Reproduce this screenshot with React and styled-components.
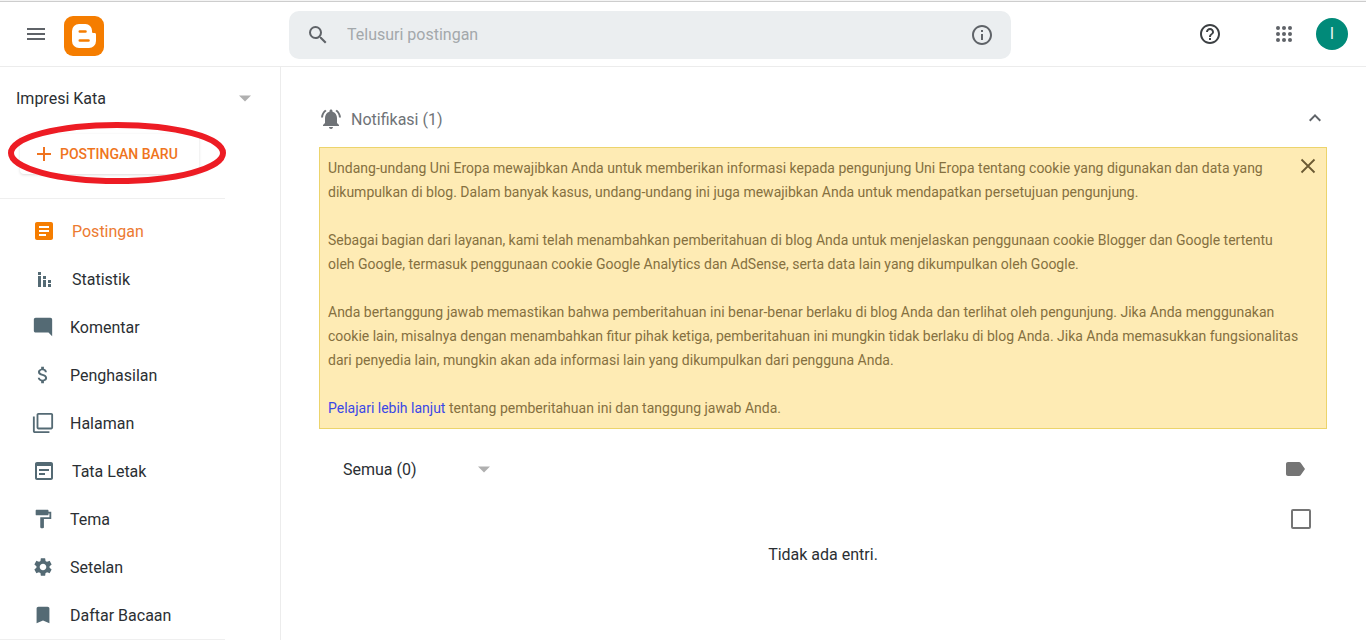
import React from "react";
import styled, { createGlobalStyle } from "styled-components";
import {
  MdMenu, MdSearch, MdInfoOutline, MdHelpOutline, MdArticle, MdModeComment,
  MdAttachMoney, MdFilterNone, MdFormatPaint, MdSettings, MdBookmark,
  MdNotificationsActive, MdExpandLess, MdLabel, MdAdd,
} from "react-icons/md";

const GlobalStyle = createGlobalStyle`
  *, *::before, *::after { box-sizing: border-box; }
  html, body, #root { height: 100%; }
  body {
    margin: 0;
    background: #fff;
    color: #2b2f33;
    font-family: Roboto, "Liberation Sans", sans-serif;
    font-size: 16px;
    line-height: 24px;
  }
  button, input, select { font: inherit; color: inherit; }
  svg { display: block; flex: none; }
`;

const Page = styled.div`
  min-height: 100%;
  display: flex;
  flex-direction: column;
  border-top: 1px solid #f4f4f4;
`;

const TopBar = styled.header`
  display: grid;
  grid-template-columns: 289px minmax(200px, 722px) 1fr;
  align-items: center;
  height: 66px;
  border-top: 1px solid #cdcdcd;
  border-bottom: 1px solid #ececec;
`;

const Brand = styled.div`
  display: flex;
  align-items: center;
  gap: 16px;
  padding: 4px 0 0 24px;
`;

const IconButton = styled.button`
  display: flex;
  align-items: center;
  justify-content: center;
  padding: 0;
  border: 0;
  background: none;
  color: ${(p) => p.$color || "#5f6368"};
  cursor: pointer;
`;

const MenuButton = styled(IconButton)`
  padding-bottom: 4px;
`;

const HomeLink = styled.a`
  display: block;
`;

const SearchBox = styled.form`
  display: flex;
  align-items: center;
  height: 48px;
  margin-top: 2px;
  padding: 0 17px;
  border-radius: 10px;
  background: #ebeef0;
`;

const SearchInput = styled.input`
  flex: 1;
  min-width: 0;
  padding: 0 16px 0 17px;
  border: 0;
  outline: 0;
  background: none;
  &::placeholder { color: #a3a8ab; opacity: 1; }
`;

const Tools = styled.div`
  display: flex;
  align-items: center;
  justify-content: flex-end;
  padding-right: 18px;
`;

const HelpSlot = styled.div`
  margin-right: 50px;
`;

const Avatar = styled.button`
  width: 32px;
  height: 32px;
  margin-left: 20px;
  padding: 0;
  border: 0;
  border-radius: 50%;
  background: #018a79;
  color: #e4f5f2;
`;

const Body = styled.div`
  flex: 1;
  display: flex;
`;

const Sidebar = styled.aside`
  flex: none;
  width: 281px;
  border-right: 1px solid #ececec;
`;

const SidebarSection = styled.div`
  width: 225px;
  padding: ${(p) => p.$pad || "0"};
  border-bottom: 1px solid #efefef;
`;

const SelectWrap = styled.div`
  display: grid;
  align-items: center;
  width: ${(p) => p.$width};
  margin: ${(p) => p.$margin || "0"};
  > * { grid-area: 1 / 1; }
  > svg { justify-self: end; color: #b0b0b0; pointer-events: none; }
`;

const Select = styled.select`
  appearance: none;
  width: 100%;
  height: 26px;
  padding: 2px 0 0;
  border: 0;
  background: none;
`;

const Highlight = styled.div`
  position: relative;
  width: 179px;
  margin-left: 20px;
`;

const HighlightRing = styled.svg`
  position: absolute;
  left: -12px;
  top: -12px;
  pointer-events: none;
`;

const NewPostButton = styled.button`
  display: flex;
  align-items: center;
  gap: 4px;
  width: 100%;
  height: 40px;
  padding: 0 12px;
  border: 0;
  border-radius: 4px;
  background: #fff;
  box-shadow: 0 1px 3px rgba(0, 0, 0, 0.14);
  color: #ef7420;
  font-size: 14px;
  font-weight: 500;
  white-space: nowrap;
`;

const NavItem = styled.a`
  display: flex;
  align-items: center;
  gap: 16px;
  height: 48px;
  padding-left: 32px;
  color: ${(p) => (p.$active ? "#ec7a31" : "#2b2f33")};
  text-decoration: none;
  > svg { color: ${(p) => (p.$active ? "#f57d00" : "#546a74")}; }
`;

const NavLabel = styled.span`
  padding-top: 2px;
`;

const Main = styled.main`
  flex: 1;
  min-width: 0;
  padding: 39px 39px 24px 38px;
`;

const NotificationHeader = styled.div`
  display: flex;
  align-items: center;
  gap: 8px;
  color: #6f7377;
  > button {
    margin-left: auto;
    padding-bottom: 2px;
  }
`;

const NotificationTitle = styled.h2`
  margin: 0;
  padding-top: 2px;
  font-size: 16px;
  font-weight: 400;
`;

const Notice = styled.section`
  display: flex;
  align-items: flex-start;
  margin-top: 15px;
  padding: 8px 10px 8px 8px;
  border: 1px solid #ecd46c;
  background: #feebb4;
  color: #857040;
  font-size: 14px;
  > button { padding-top: 2px; }
`;

const NoticeText = styled.div`
  flex: 1;
`;

const Paragraph = styled.p`
  margin: 0;
  & + & { margin-top: 24px; }
`;

const Link = styled.a`
  color: #3a48e6;
  text-decoration: none;
`;

const ListBar = styled.div`
  display: flex;
  align-items: center;
  justify-content: space-between;
  padding: 27px 20px 0 24px;
`;

const SelectAllRow = styled.div`
  display: flex;
  justify-content: flex-end;
  padding: 27px 16px 0 0;
`;

const Checkbox = styled.input`
  appearance: none;
  width: 20px;
  height: 20px;
  margin: 0;
  border: 2px solid #757575;
  border-radius: 2px;
  background: #fff;
`;

const Empty = styled.p`
  margin: 14px 0 0;
  text-align: center;
`;

const BloggerLogo = () => (
  <svg width="40" height="40" viewBox="0 0 40 40" aria-hidden="true">
    <rect width="40" height="40" rx="9" fill="#f57d00" />
    <path
      fill="#fff"
      d="M15 8h6.500a6.500 6.500 0 0 1 6.500 6.500v1c0 1 .6 1.500 1.500 1.500h1c1 0 1.500.7 1.500 1.700V25a7 7 0 0 1-7 7H15a7 7 0 0 1-7-7V15a7 7 0 0 1 7-7z"
    />
    <path stroke="#f57d00" strokeWidth="2.600" strokeLinecap="round" d="M15.800 15.500h5.700M15.800 24.500h8.700" />
  </svg>
);

const AppsIcon = () => (
  <svg width="24" height="24" viewBox="0 0 24 24" fill="currentColor" aria-hidden="true">
    {[6, 12, 18].map((y) => [6, 12, 18].map((x) => <circle key={`${x}-${y}`} cx={x} cy={y} r="2" />))}
  </svg>
);

const CaretIcon = () => (
  <svg width="24" height="24" viewBox="0 0 24 24" fill="currentColor" aria-hidden="true">
    <path d="M6 9.500h12l-6 6z" />
  </svg>
);

const StatsIcon = ({ size }) => (
  <svg width={size} height={size} viewBox="0 0 24 24" fill="currentColor" aria-hidden="true">
    <path d="M6 5h3v3H6zM6 9h3v11H6zM11 9h3v3h-3zM11 13h3v7h-3zM16 13h3v3h-3zM16 17h3v3h-3z" />
  </svg>
);

const LayoutIcon = ({ size }) => (
  <svg width={size} height={size} viewBox="0 0 24 24" fill="currentColor" aria-hidden="true">
    <path d="M19 3H5c-1.110 0-2 .9-2 2v14c0 1.100.890 2 2 2h14c1.100 0 2-.9 2-2V5c0-1.100-.9-2-2-2zm0 16H5V7h14v12zm-2-7H7v-2h10v2zm-4 4H7v-2h6v2z" />
  </svg>
);

const CloseIcon = () => (
  <svg width="16" height="16" viewBox="0 0 16 16" stroke="currentColor" strokeWidth="1.800" aria-hidden="true">
    <path d="M1.500 1.500l13 13M14.500 1.500l-13 13" />
  </svg>
);

const navItems = [
  { label: "Postingan", Icon: MdArticle, size: 24, active: true },
  { label: "Statistik", Icon: StatsIcon, size: 24 },
  { label: "Komentar", Icon: MdModeComment, size: 22 },
  { label: "Penghasilan", Icon: MdAttachMoney, size: 22 },
  { label: "Halaman", Icon: MdFilterNone, size: 22 },
  { label: "Tata Letak", Icon: LayoutIcon, size: 24 },
  { label: "Tema", Icon: MdFormatPaint, size: 22 },
  { label: "Setelan", Icon: MdSettings, size: 22 },
  { label: "Daftar Bacaan", Icon: MdBookmark, size: 22 },
];

export default function App() {
  return (
    <Page>
      <GlobalStyle />
      <TopBar>
        <Brand>
          <MenuButton type="button" aria-label="Menu"><MdMenu size={24} /></MenuButton>
          <HomeLink href="#" aria-label="Blogger"><BloggerLogo /></HomeLink>
        </Brand>
        <SearchBox role="search">
          <IconButton type="button" aria-label="Telusuri"><MdSearch size={24} /></IconButton>
          <SearchInput type="text" aria-label="Telusuri postingan" placeholder="Telusuri postingan" />
          <IconButton type="button" aria-label="Info"><MdInfoOutline size={24} /></IconButton>
        </SearchBox>
        <Tools>
          <HelpSlot>
            <IconButton type="button" aria-label="Bantuan" $color="#3c4043"><MdHelpOutline size={24} /></IconButton>
          </HelpSlot>
          <IconButton type="button" aria-label="Aplikasi"><AppsIcon /></IconButton>
          <Avatar type="button">I</Avatar>
        </Tools>
      </TopBar>

      <Body>
        <Sidebar>
          <SelectWrap $width="241px" $margin="18px 0 23px 16px">
            <Select aria-label="Blog"><option>Impresi Kata</option></Select>
            <CaretIcon />
          </SelectWrap>
          <SidebarSection $pad="0 0 24px">
            <Highlight>
              <NewPostButton type="button">
                <MdAdd size={24} />
                POSTINGAN BARU
              </NewPostButton>
              <HighlightRing width="218" height="62" viewBox="0 0 218 62" fill="none" aria-hidden="true">
                <ellipse cx="109" cy="31" rx="106" ry="28" stroke="#ed1c24" strokeWidth="6" />
              </HighlightRing>
            </Highlight>
          </SidebarSection>
          <SidebarSection as="nav" $pad="8px 0 0">
            {navItems.map(({ label, Icon, size, active }) => (
              <NavItem key={label} href="#" $active={active}>
                <Icon size={size} />
                <NavLabel>{label}</NavLabel>
              </NavItem>
            ))}
          </SidebarSection>
        </Sidebar>

        <Main>
          <NotificationHeader>
            <MdNotificationsActive size={24} />
            <NotificationTitle>Notifikasi (1)</NotificationTitle>
            <IconButton type="button" aria-label="Ciutkan"><MdExpandLess size={24} /></IconButton>
          </NotificationHeader>
          <Notice>
            <NoticeText>
              <Paragraph>
                Undang-undang Uni Eropa mewajibkan Anda untuk memberikan informasi kepada pengunjung Uni Eropa tentang cookie yang digunakan dan data yang dikumpulkan di blog. Dalam banyak kasus, undang-undang ini juga mewajibkan Anda untuk mendapatkan persetujuan pengunjung.
              </Paragraph>
              <Paragraph>
                Sebagai bagian dari layanan, kami telah menambahkan pemberitahuan di blog Anda untuk menjelaskan penggunaan cookie Blogger dan Google tertentu oleh Google, termasuk penggunaan cookie Google Analytics dan AdSense, serta data lain yang dikumpulkan oleh Google.
              </Paragraph>
              <Paragraph>
                Anda bertanggung jawab memastikan bahwa pemberitahuan ini benar-benar berlaku di blog Anda dan terlihat oleh pengunjung. Jika Anda menggunakan cookie lain, misalnya dengan menambahkan fitur pihak ketiga, pemberitahuan ini mungkin tidak berlaku di blog Anda. Jika Anda memasukkan fungsionalitas dari penyedia lain, mungkin akan ada informasi lain yang dikumpulkan dari pengguna Anda.
              </Paragraph>
              <Paragraph>
                <Link href="#">Pelajari lebih lanjut</Link> tentang pemberitahuan ini dan tanggung jawab Anda.
              </Paragraph>
            </NoticeText>
            <IconButton type="button" aria-label="Tutup" $color="#6b5a33"><CloseIcon /></IconButton>
          </Notice>
          <ListBar>
            <SelectWrap $width="153px">
              <Select aria-label="Filter postingan"><option>Semua (0)</option></Select>
              <CaretIcon />
            </SelectWrap>
            <IconButton type="button" aria-label="Label" $color="#757575"><MdLabel size={24} /></IconButton>
          </ListBar>
          <SelectAllRow>
            <Checkbox type="checkbox" aria-label="Pilih semua" />
          </SelectAllRow>
          <Empty>Tidak ada entri.</Empty>
        </Main>
      </Body>
    </Page>
  );
}
